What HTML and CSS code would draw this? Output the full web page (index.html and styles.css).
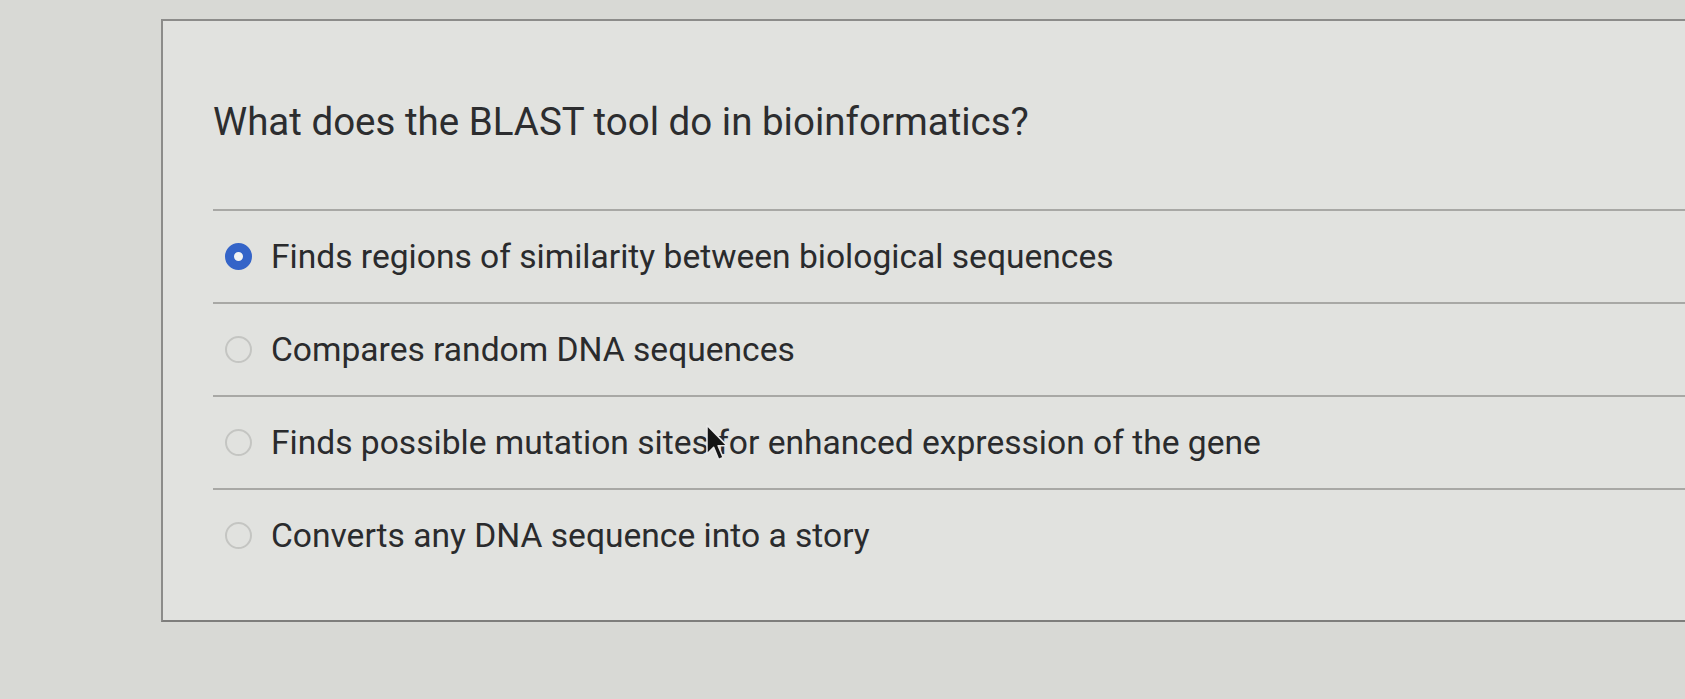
FILE: index.html
```html
<!DOCTYPE html>
<html lang="en">
<head>
  <meta charset="utf-8">
  <title>Question</title>
  <link rel="stylesheet" href="styles.css">
</head>
<body>
  <div class="page">
    <div class="card">
      <h1 class="question">What does the BLAST tool do in bioinformatics?</h1>

      <ul class="options">
        <li class="option">
          <span class="radio checked"></span>
          <span class="label">Finds regions of similarity between biological sequences</span>
        </li>
        <li class="option">
          <span class="radio"></span>
          <span class="label">Compares random DNA sequences</span>
        </li>
        <li class="option">
          <span class="radio"></span>
          <span class="label">Finds possible mutation sites<span class="pointer"><svg class="cursor" width="26" height="40" viewBox="0 0 22 36">
            <path d="M2 1 L2 27 L8 21 L12.5 32 L16.5 30.2 L12 19.5 L20 19.5 Z" fill="#151515" stroke="#e8e8e8" stroke-width="1.4" stroke-linejoin="round"/>
          </svg></span> for enhanced expression of the gene</span>
        </li>
        <li class="option">
          <span class="radio"></span>
          <span class="label">Converts any DNA sequence into a story</span>
        </li>
      </ul>
    </div>
  </div>
</body>
</html>
```

FILE: styles.css
```css
body {
  margin: 0;
  background: #d8d9d5;
  font-family: Roboto, 'Liberation Sans', sans-serif;
  color: #2a2b2d;
  overflow: hidden;
}

.page {
  padding: 19px 0 0 161px;
  height: 680px;
}

.card {
  background: #e1e2df;
  border-top: 2px solid #8c8c8a;
  border-left: 2px solid #8c8c8a;
  border-bottom: 2px solid #7e7e7c;
  padding: 78px 0 39px 50px;
}

.question {
  margin: 0 0 64px 0;
  font-size: 38.5px;
  font-weight: 400;
  line-height: 1.2;
  color: #2c2d2f;
}

.options {
  list-style: none;
  margin: 0;
  padding: 0;
}

.option {
  display: flex;
  align-items: center;
  height: 93px;
  border-top: 2px solid #a8a8a5;
  box-sizing: border-box;
}

.radio {
  width: 27px;
  height: 27px;
  margin: 0 19px 0 12px;
  border-radius: 50%;
  border: 2px solid #c4c5c2;
  box-sizing: border-box;
  flex-shrink: 0;
}

.radio.checked {
  border: 9px solid #3464c8;
  background: #f2f3f3;
}

.label {
  font-size: 33.6px;
  line-height: 1.2;
}

/* pointeur posé entre "sites" et "for" */
.pointer {
  position: relative;
}

.cursor {
  position: absolute;
  left: -5px;
  top: 1px;
}
```
